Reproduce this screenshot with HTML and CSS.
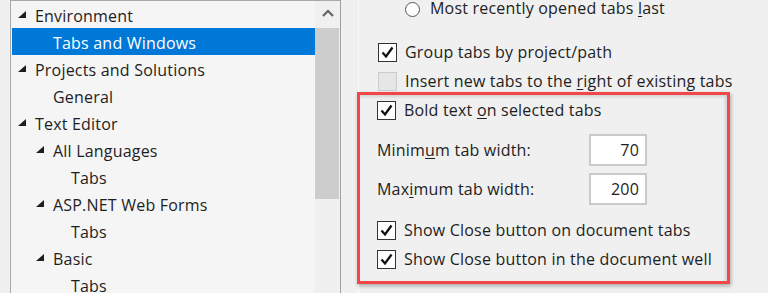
FILE: index.html
```html
<!DOCTYPE html>
<html lang="en">
<head>
    <meta charset="UTF-8">
    <title>Options - Tabs and Windows</title>
    <link rel="stylesheet" href="styles.css">
</head>
<body>
    <div class="tree-wrap">
        <ul class="tree">
            <li class="node lvl0"><span class="toggle"><svg width="8" height="7" viewBox="0 0 8 7"><polygon points="8,0 8,7 0,7"/></svg></span>Environment</li>
            <li class="node lvl1 selected"><span class="toggle"></span>Tabs and Windows</li>
            <li class="node lvl0"><span class="toggle"><svg width="8" height="7" viewBox="0 0 8 7"><polygon points="8,0 8,7 0,7"/></svg></span>Projects and Solutions</li>
            <li class="node lvl1"><span class="toggle"></span>General</li>
            <li class="node lvl0"><span class="toggle"><svg width="8" height="7" viewBox="0 0 8 7"><polygon points="8,0 8,7 0,7"/></svg></span>Text Editor</li>
            <li class="node lvl1"><span class="toggle"><svg width="8" height="7" viewBox="0 0 8 7"><polygon points="8,0 8,7 0,7"/></svg></span>All Languages</li>
            <li class="node lvl2"><span class="toggle"></span>Tabs</li>
            <li class="node lvl1"><span class="toggle"><svg width="8" height="7" viewBox="0 0 8 7"><polygon points="8,0 8,7 0,7"/></svg></span>ASP.NET Web Forms</li>
            <li class="node lvl2"><span class="toggle"></span>Tabs</li>
            <li class="node lvl1"><span class="toggle"><svg width="8" height="7" viewBox="0 0 8 7"><polygon points="8,0 8,7 0,7"/></svg></span>Basic</li>
            <li class="node lvl2"><span class="toggle"></span>Tabs</li>
        </ul>
        <div class="scrollbar">
            <div class="scroll-btn">
                <svg width="12" height="8" viewBox="0 0 12 8"><polyline points="1,7 6,2 11,7" fill="none" stroke="#606060" stroke-width="2"/></svg>
            </div>
            <div class="scroll-thumb"></div>
        </div>
    </div>

    <div class="options">
        <div class="radio-row">
            <span class="radio"></span>
            <span>Most recently opened tabs <u>l</u>ast</span>
        </div>
        <div class="check-row group-row">
            <span class="checkbox"><svg width="17" height="17" viewBox="0 0 17 17"><polyline points="3.5,8.5 7,12.5 13.5,3.5" fill="none" stroke="#111" stroke-width="2.3"/></svg></span>
            <span>Group tabs by project/path</span>
        </div>
        <div class="check-row insert-row">
            <span class="checkbox disabled"></span>
            <span>Insert new tabs to the <u>r</u>ight of existing tabs</span>
        </div>

        <div class="highlight">
            <div class="check-row">
                <span class="checkbox"><svg width="17" height="17" viewBox="0 0 17 17"><polyline points="3.5,8.5 7,12.5 13.5,3.5" fill="none" stroke="#111" stroke-width="2.3"/></svg></span>
                <span>Bold text <u>o</u>n selected tabs</span>
            </div>
            <div class="field-row min-row">
                <label class="field-label">Minim<u>u</u>m tab width:</label>
                <div class="num-box">70</div>
            </div>
            <div class="field-row max-row">
                <label class="field-label">Max<u>i</u>mum tab width:</label>
                <div class="num-box">200</div>
            </div>
            <div class="check-row show1-row">
                <span class="checkbox"><svg width="17" height="17" viewBox="0 0 17 17"><polyline points="3.5,8.5 7,12.5 13.5,3.5" fill="none" stroke="#111" stroke-width="2.3"/></svg></span>
                <span>Show Close button on document tabs</span>
            </div>
            <div class="check-row show2-row">
                <span class="checkbox"><svg width="17" height="17" viewBox="0 0 17 17"><polyline points="3.5,8.5 7,12.5 13.5,3.5" fill="none" stroke="#111" stroke-width="2.3"/></svg></span>
                <span>Show Close button in the document well</span>
            </div>
        </div>
    </div>
</body>
</html>
```

FILE: styles.css
```css
body {
    margin: 0;
    height: 293px;
    overflow: hidden;
    background: #f0f0f0;
    font-family: "Open Sans", "Noto Sans", sans-serif;
    font-size: 16px;
    letter-spacing: 0.2px;
    color: #1e1e1e;
    display: flex;
}
u {
    text-decoration-thickness: 1px;
    text-underline-offset: 2px;
}
.tree-wrap {
    margin-left: 10px;
    width: 329px;
    height: 320px;
    border-left: 1px solid #a9a9a9;
    border-top: 1px solid #a9a9a9;
    border-right: 1px solid #a0a0a0;
    background: #f5f5f5;
    display: flex;
}
.tree {
    list-style: none;
    margin: 0;
    padding: 0;
    flex: 1;
}
.node {
    height: 27px;
    margin-left: 1px;
    display: flex;
    align-items: center;
    white-space: nowrap;
    padding-top: 2px;
    box-sizing: border-box;
}
.lvl0 { padding-left: 6px; }
.lvl1 { padding-left: 24px; }
.lvl2 { padding-left: 42px; }
.toggle {
    width: 17px;
    flex: none;
    display: flex;
    align-items: center;
    margin-top: -3px;
}
.toggle svg {
    fill: #1e1e1e;
}
.selected {
    background: #0078d7;
    color: #fff;
}
.scrollbar {
    width: 25px;
    background: #f0f0f0;
    display: flex;
    flex-direction: column;
}
.scroll-btn {
    height: 27px;
    display: flex;
    align-items: center;
    justify-content: center;
}
.scroll-btn svg {
    margin-top: -3px;
}
.scroll-thumb {
    height: 171px;
    margin-right: 1px;
    background: #cdcdcd;
}
.options {
    flex: 1;
    border-left: 1px solid #fafafa;
    margin-left: 17px;
    line-height: 20px;
}
.radio-row {
    height: 17px;
    line-height: 17px;
    display: flex;
    align-items: center;
    margin-left: 46px;
    gap: 10px;
}
.radio {
    width: 13px;
    height: 13px;
    border: 1px solid #555;
    border-radius: 50%;
    background: #fff;
    margin-top: 1px;
}
.check-row {
    height: 20px;
    display: flex;
    align-items: center;
    gap: 8px;
    white-space: nowrap;
}
.group-row {
    margin-top: 25px;
    margin-left: 19px;
}
.insert-row {
    margin-top: 9px;
    margin-left: 19px;
}
.checkbox {
    width: 17px;
    height: 17px;
    border: 1px solid #333;
    background: #fff;
    flex: none;
    display: flex;
}
.checkbox.disabled {
    background: #e6e6e6;
    border-color: #cccccc;
}
.highlight {
    margin-top: 1px;
    margin-left: -2px;
    width: 350px;
    border: 3px solid #f2474a;
    padding: 5px 0 12px 17px;
    box-shadow: 1px 2px 4px rgba(0, 0, 0, 0.3), inset -2px 2px 3px rgba(0, 0, 0, 0.12);
}
.field-row {
    height: 32px;
    display: flex;
    align-items: center;
}
.min-row { margin-top: 14px; }
.max-row { margin-top: 7px; }
.field-label {
    width: 212px;
}
.num-box {
    width: 48px;
    height: 28px;
    border: 2px solid #cacaca;
    background: #fff;
    text-align: right;
    padding-right: 6px;
    line-height: 28px;
}
.show1-row { margin-top: 15px; }
.show2-row { margin-top: 9px; }
```
